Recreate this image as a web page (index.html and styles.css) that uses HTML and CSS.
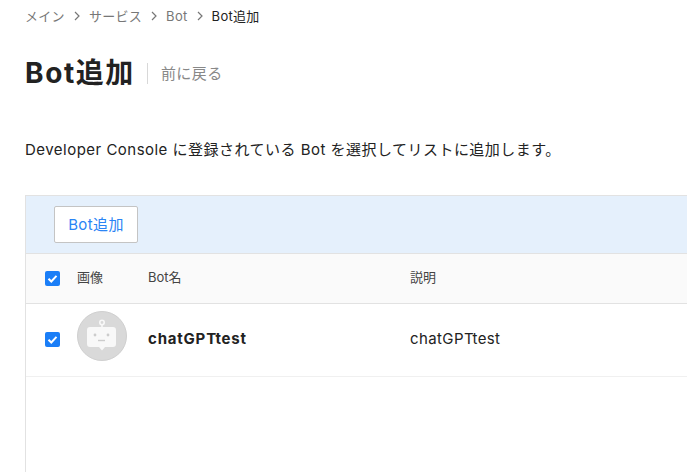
FILE: index.html
```html
<!DOCTYPE html>
<html lang="ja">
<head>
    <meta charset="UTF-8">
    <meta name="viewport" content="width=device-width, initial-scale=1.0">
    <title>Bot追加</title>
    <link rel="stylesheet" href="styles.css">
</head>
<body>
    <!-- Breadcrumb -->
    <div class="breadcrumb">
        <a href="#">メイン</a>
        <svg class="crumb-arrow" viewBox="0 0 8 10"><path d="M2 1l4 4-4 4"/></svg>
        <a href="#">サービス</a>
        <svg class="crumb-arrow" viewBox="0 0 8 10"><path d="M2 1l4 4-4 4"/></svg>
        <a href="#">Bot</a>
        <svg class="crumb-arrow" viewBox="0 0 8 10"><path d="M2 1l4 4-4 4"/></svg>
        <span class="crumb-current">Bot追加</span>
    </div>

    <!-- Page Title -->
    <div class="page-title">
        <h1>Bot追加</h1>
        <a href="#" class="back-link">前に戻る</a>
    </div>

    <p class="description">Developer Console に登録されている Bot を選択してリストに追加します。</p>

    <!-- Bot Table -->
    <div class="panel">
        <div class="toolbar">
            <button class="add-button">Bot追加</button>
        </div>
        <div class="table-row table-head">
            <span class="check"><svg viewBox="0 0 15 15"><path d="M3.500 7.800l2.800 2.700 5.200-5.600"/></svg></span>
            <span class="col-image">画像</span>
            <span class="col-name">Bot名</span>
            <span class="col-desc">説明</span>
        </div>
        <div class="table-row table-body">
            <span class="check"><svg viewBox="0 0 15 15"><path d="M3.500 7.800l2.800 2.700 5.200-5.600"/></svg></span>
            <span class="col-image">
                <svg class="avatar" viewBox="0 0 50 50">
                    <circle cx="25" cy="25" r="24.500" fill="#d9d9d9" stroke="#cfcfcf"/>
                    <circle cx="25" cy="11.500" r="2.200" fill="none" stroke="#f8f8f8" stroke-width="1.600"/>
                    <path d="M25 13.500v3" stroke="#f8f8f8" stroke-width="1.600"/>
                    <path d="M13 16h23a3 3 0 0 1 3 3v14a3 3 0 0 1-3 3H28l-3 3.500-3-3.500h-9a3 3 0 0 1-3-3V19a3 3 0 0 1 3-3z" fill="#f8f8f8"/>
                    <circle cx="18" cy="24" r="1.400" fill="#cccccc"/>
                    <circle cx="31" cy="24" r="1.400" fill="#cccccc"/>
                    <path d="M21 29.500h7" stroke="#cccccc" stroke-width="1.400"/>
                </svg>
            </span>
            <span class="col-name bot-name">chatGPTtest</span>
            <span class="col-desc bot-desc">chatGPTtest</span>
        </div>
    </div>
</body>
</html>
```

FILE: styles.css
```css
html, body {
    height: 100%;
    overflow: hidden;
}

body {
    display: flex;
    flex-direction: column;
    font-family: Inter, "Noto Sans CJK JP", sans-serif;
    margin: 0;
    padding: 0 0 0 25px;
    background-color: #fff;
    color: #222;
    box-sizing: border-box;
}

/* Breadcrumb */
.breadcrumb {
    display: flex;
    align-items: center;
    height: 16px;
    margin-top: 8px;
    font-size: 13px;
    line-height: 16px;
    letter-spacing: 0.3px;
}

.breadcrumb a {
    color: #777;
    text-decoration: none;
}

.crumb-arrow {
    width: 8px;
    height: 10px;
    margin: 0 8px;
    fill: none;
    stroke: #777;
    stroke-width: 1.200;
}

.crumb-current {
    color: #222;
}

/* Page Title */
.page-title {
    display: flex;
    align-items: center;
    margin-top: 30px;
    height: 38px;
}

.page-title h1 {
    margin: 0;
    font-size: 28px;
    line-height: 38px;
    font-weight: 700;
    letter-spacing: 1.600px;
}

.back-link {
    margin-left: 12px;
    padding-left: 13px;
    border-left: 1px solid #d8d8d8;
    font-size: 15px;
    line-height: 21px;
    letter-spacing: 0.400px;
    color: #888;
    text-decoration: none;
}

.description {
    margin: 46px 0 0;
    font-size: 15px;
    line-height: 24px;
    letter-spacing: 0.480px;
}

/* Bot Table */
.panel {
    flex: 1;
    margin-top: 33px;
    border-top: 1px solid #e2e2e2;
    border-left: 1px solid #e2e2e2;
}

.toolbar {
    height: 58px;
    padding: 10px 28px;
    box-sizing: border-box;
    background-color: #e5f0fc;
    border-bottom: 1px solid #e2e2e2;
}

.add-button {
    display: block;
    width: 84px;
    height: 37px;
    padding: 0 0 3px;
    font-family: inherit;
    font-size: 15px;
    letter-spacing: 0.400px;
    color: #2a84f5;
    background-color: #fff;
    border: 1px solid #c4c4c4;
    border-radius: 2px;
}

.table-row {
    display: flex;
    align-items: center;
    box-sizing: border-box;
}

.table-head {
    height: 50px;
    padding-bottom: 5px;
    background-color: #fafafa;
    border-bottom: 1px solid #e2e2e2;
    font-size: 13px;
    color: #444;
}

.table-head .check {
    margin-top: 5px;
}

.table-body {
    height: 73px;
    border-bottom: 1px solid #f0f0f0;
    font-size: 15px;
    padding-bottom: 3px;
}

.table-body .check {
    margin-top: 2px;
}

.check {
    display: block;
    flex-shrink: 0;
    width: 15px;
    height: 15px;
    margin-left: 19px;
    background-color: #1a7ef7;
    border-radius: 2px;
}

.check svg {
    display: block;
    fill: none;
    stroke: #fff;
    stroke-width: 2;
}

.col-image {
    display: block;
    width: 71px;
    margin-left: 17px;
}

.avatar {
    display: block;
    width: 50px;
    height: 50px;
    margin-bottom: 5px;
}

.col-name {
    width: 262px;
}

.bot-name {
    font-weight: 700;
    letter-spacing: 0.800px;
}

.bot-desc {
    letter-spacing: 0.400px;
}
```
